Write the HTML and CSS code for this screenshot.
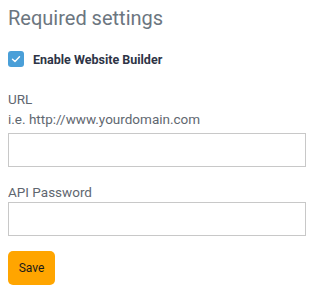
FILE: index.html
```html
<!DOCTYPE html>
<html>
<head>
  <title>Required settings</title>
  <link rel="stylesheet" href="styles.css">
</head>
<body>
  <form class="settings">
    <h2 class="head">Required settings</h2>
    <label class="check_row">
      <span class="checkbox">
        <svg width="10" height="8" viewBox="0 0 10 8"><path d="M1.5 4.2 L4 6.5 L8.5 1.8" fill="none" stroke="#fff" stroke-width="1.4" stroke-linecap="round" stroke-linejoin="round"/></svg>
      </span>
      <span class="check_label">Enable Website Builder</span>
    </label>
    <div class="field first">
      <p class="label">URL</p>
      <p class="hint">i.e. http://www.yourdomain.com</p>
      <input class="textbox" type="text">
    </div>
    <div class="field">
      <p class="label">API Password</p>
      <input class="textbox" type="password">
    </div>
    <button type="button" class="save">Save</button>
  </form>
</body>
</html>
```

FILE: styles.css
```css
body{
 margin: 8px;
 background-color: #fff;
 font-family: Roboto, "Liberation Sans", sans-serif;
 color: #5f6770;
}
.head{
 margin: 0;
 font-size: 20px;
 font-weight: normal;
 line-height: 20px;
 color: #6c7680;
}
.check_row{
 display: flex;
 align-items: center;
 gap: 9px;
 margin-top: 23px;
}
.checkbox{
 width: 16px;
 height: 16px;
 border-radius: 3px;
 background-color: #4a9fd8;
 display: flex;
 align-items: center;
 justify-content: center;
}
.check_label{
 font-size: 12.5px;
 font-weight: bold;
 color: #2e3446;
}
.field{
 margin-top: 15px;
}
.field.first{
 margin-top: 22px;
}
.label, .hint{
 margin: 0;
 font-size: 13.5px;
 line-height: 20px;
 color: #5f6770;
}
.hint{
 margin-bottom: 4px;
}
.textbox{
 display: block;
 box-sizing: border-box;
 width: 100%;
 height: 34px;
 margin: 0;
 border: 1px solid #c8c8c8;
 border-radius: 0;
 outline: none;
}
.save{
 margin-top: 15px;
 width: 47px;
 height: 34px;
 padding: 0;
 border: none;
 border-radius: 5px;
 background-color: #ffa500;
 color: #1a1a1a;
 font-family: Roboto, "Liberation Sans", sans-serif;
 font-size: 12px;
}
```
